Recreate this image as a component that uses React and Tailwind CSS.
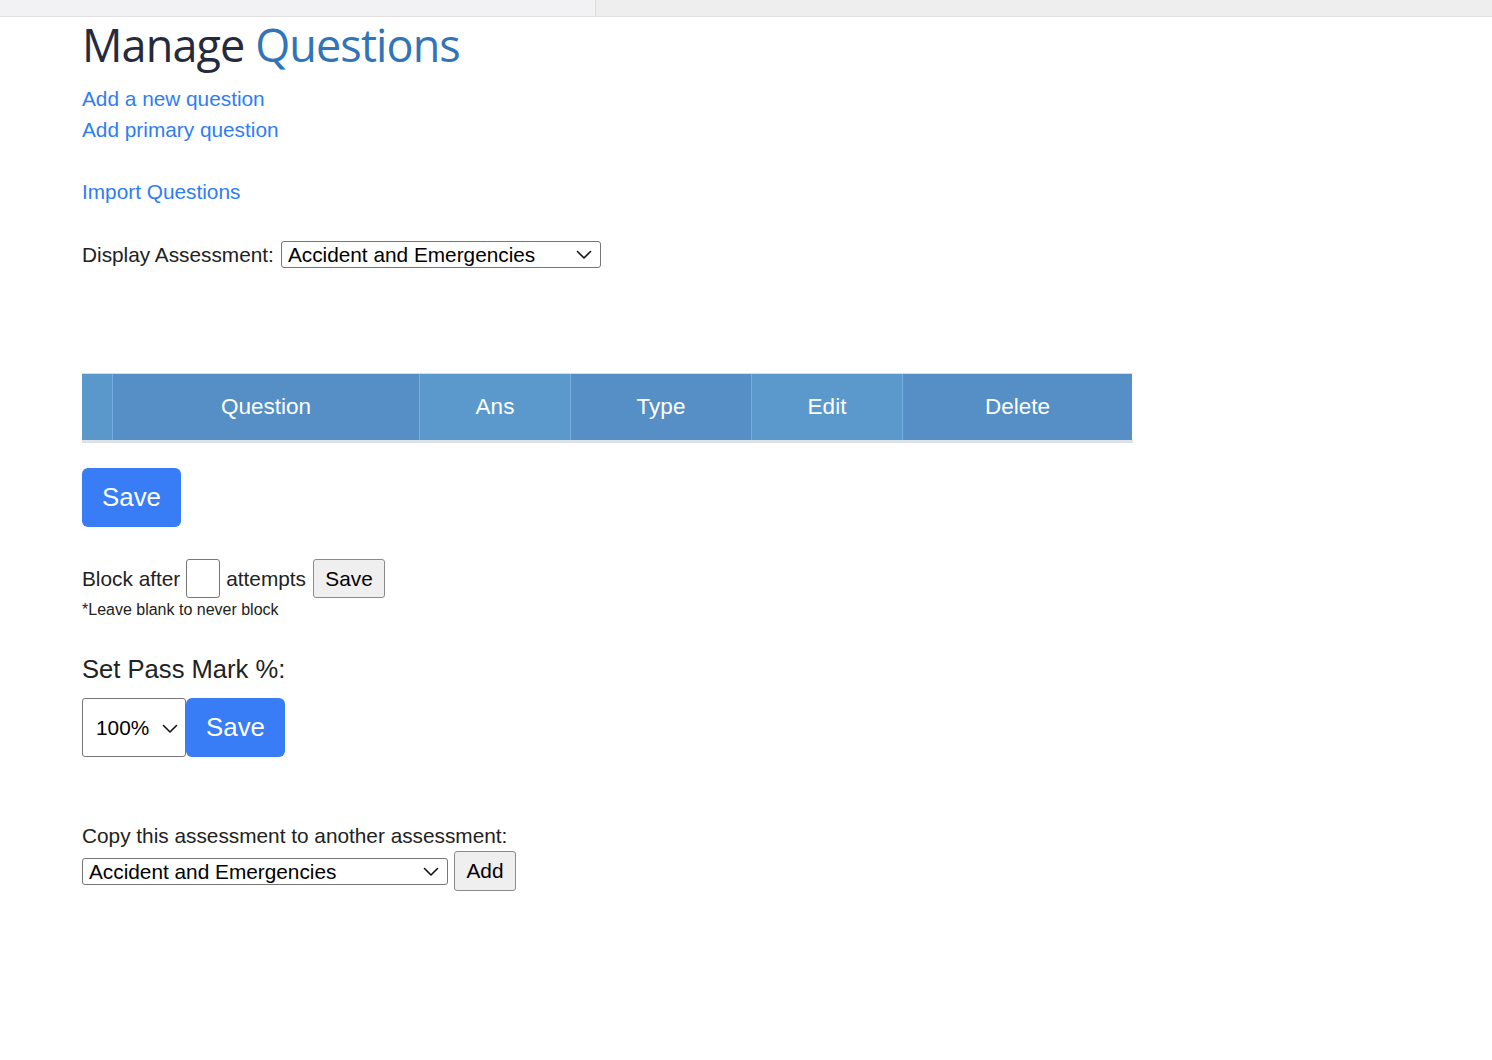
import React from "react";

function Chevron({ className }) {
  return (
    <svg className={className} width="16" height="10" viewBox="0 0 16 10" fill="none">
      <path d="M1.5 1.5 L8 8 L14.5 1.5" stroke="#111" strokeWidth="1.6" strokeLinecap="round" strokeLinejoin="round" />
    </svg>
  );
}

function Select({ className, textClass, value, chevronClass }) {
  return (
    <div className={"relative flex items-center bg-white " + className}>
      <span className={"text-black " + textClass}>{value}</span>
      <Chevron className={"absolute " + chevronClass} />
    </div>
  );
}

export default function App() {
  const cols = [
    { label: "", w: "w-[30px]", bg: "bg-[#5a97cb]" },
    { label: "Question", w: "w-[307px]", bg: "bg-[#558fc5]" },
    { label: "Ans", w: "w-[151px]", bg: "bg-[#5b99cd]" },
    { label: "Type", w: "w-[181px]", bg: "bg-[#558fc5]" },
    { label: "Edit", w: "w-[151px]", bg: "bg-[#5b99cd]" },
    { label: "Delete", w: "w-[230px]", bg: "bg-[#558fc5]" },
  ];
  return (
    <div className="min-h-[1060px] bg-white font-['Liberation_Sans',Arial,sans-serif] text-[#222]">
      <div className="flex h-[17px] border-b border-[#e2e2e2]">
        <div className="w-[596px] bg-[#f2f2f4] border-r border-[#dcdcdc]"></div>
        <div className="flex-1 bg-[#eeeeee]"></div>
      </div>
      <div className="pl-[82px]">
        <h1 className="font-['Open_Sans',sans-serif] text-[45px] leading-[56px] tracking-[-0.9px] text-[#262a3d]">
          Manage <span className="text-[#3174b8]">Questions</span>
        </h1>
        <div className="mt-[10px] text-[20.8px] leading-[31px] text-[#2f7df6]">
          <div><a className="cursor-pointer">Add a new question</a></div>
          <div><a className="cursor-pointer">Add primary question</a></div>
          <div className="mt-[31px]"><a className="cursor-pointer">Import Questions</a></div>
        </div>
        <div className="mt-[34px] flex h-[27px] items-center text-[20.8px]">
          <span className="mr-[7px]">Display Assessment:</span>
          <Select
            className="w-[320px] h-[27px] border border-[#767676] rounded-[3px] pl-[6px]"
            textClass="text-[20.8px] leading-[25px]"
            value="Accident and Emergencies"
            chevronClass="right-[8px] top-[8px]"
          />
        </div>
        <div className="mt-[105px] w-[1051px] border-t border-[#d7dde4] border-b-[3px] border-b-[#dde2e8]">
          <div className="flex h-[66px]">
            {cols.map((c, i) => (
              <div
                key={i}
                className={
                  "flex items-center justify-center text-[22.5px] text-white " +
                  c.w + " " + c.bg + " " + (i > 0 ? "border-l border-[#74ade0]" : "")
                }
              >
                {c.label}
              </div>
            ))}
          </div>
        </div>
        <button className="mt-[25px] block h-[59px] w-[99px] rounded-[6px] bg-[#387cf6] text-[25.8px] text-white">
          Save
        </button>
        <div className="mt-[32px] flex h-[39px] items-center text-[20.8px]">
          <span>Block after</span>
          <div className="mx-[6px] h-[39px] w-[34px] rounded-[3px] border border-[#767676] bg-white"></div>
          <span>attempts</span>
          <button className="ml-[7px] h-[39px] w-[72px] rounded-[3px] border border-[#8a8a8a] bg-[#efefef] text-[20.8px] text-black">
            Save
          </button>
        </div>
        <div className="mt-[2px] text-[16px] leading-[20px]">*Leave blank to never block</div>
        <div className="mt-[35px] text-[25.6px] leading-[28px]">Set Pass Mark %:</div>
        <div className="mt-[15px] flex h-[59px]">
          <Select
            className="w-[104px] h-[59px] border border-[#767676] rounded-[3px] pl-[13px]"
            textClass="text-[20.8px]"
            value="100%"
            chevronClass="right-[7px] top-[25px]"
          />
          <button className="h-[59px] w-[99px] rounded-[6px] bg-[#387cf6] text-[25.8px] text-white">
            Save
          </button>
        </div>
        <div className="mt-[67px] text-[20.8px] leading-[24px]">Copy this assessment to another assessment:</div>
        <div className="mt-[3px] flex h-[40px] items-center">
          <Select
            className="w-[366px] h-[27px] border border-[#767676] rounded-[3px] pl-[6px]"
            textClass="text-[20.8px] leading-[25px]"
            value="Accident and Emergencies"
            chevronClass="right-[8px] top-[8px]"
          />
          <button className="ml-[6px] h-[40px] w-[62px] rounded-[3px] border border-[#8a8a8a] bg-[#efefef] text-[20.8px] text-black">
            Add
          </button>
        </div>
      </div>
    </div>
  );
}
